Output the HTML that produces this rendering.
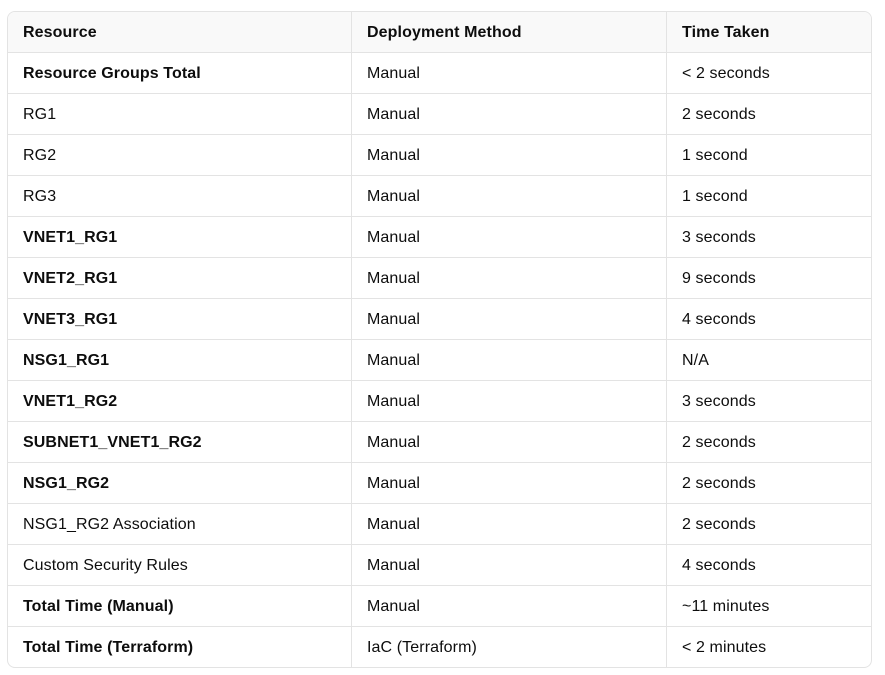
<!DOCTYPE html>
<html><head><style>
body{margin:0;background:#fff;font-family:"Liberation Sans",sans-serif;color:#0d0d0d}
.w{position:absolute;left:7px;top:11px;width:863px;height:655px;border:1px solid #e3e3e3;border-radius:8px;overflow:hidden}
table{border-collapse:collapse;width:865px;margin:-1px;table-layout:fixed}
td,th{height:41px;box-sizing:border-box;border:1px solid #e3e3e3;padding:2px 0 0 15px;font-size:16px;text-align:left;font-weight:normal;letter-spacing:0.1px}
th{background:#f9f9f9;font-weight:bold}
.b{font-weight:bold}
</style></head><body>
<div class="w"><table>
<colgroup><col style="width:344px"><col style="width:315px"><col></colgroup>
<tr><th>Resource</th><th>Deployment Method</th><th>Time Taken</th></tr>
<tr><td class="b">Resource Groups Total</td><td>Manual</td><td>&lt; 2 seconds</td></tr>
<tr><td>RG1</td><td>Manual</td><td>2 seconds</td></tr>
<tr><td>RG2</td><td>Manual</td><td>1 second</td></tr>
<tr><td>RG3</td><td>Manual</td><td>1 second</td></tr>
<tr><td class="b">VNET1_RG1</td><td>Manual</td><td>3 seconds</td></tr>
<tr><td class="b">VNET2_RG1</td><td>Manual</td><td>9 seconds</td></tr>
<tr><td class="b">VNET3_RG1</td><td>Manual</td><td>4 seconds</td></tr>
<tr><td class="b">NSG1_RG1</td><td>Manual</td><td>N/A</td></tr>
<tr><td class="b">VNET1_RG2</td><td>Manual</td><td>3 seconds</td></tr>
<tr><td class="b">SUBNET1_VNET1_RG2</td><td>Manual</td><td>2 seconds</td></tr>
<tr><td class="b">NSG1_RG2</td><td>Manual</td><td>2 seconds</td></tr>
<tr><td>NSG1_RG2 Association</td><td>Manual</td><td>2 seconds</td></tr>
<tr><td>Custom Security Rules</td><td>Manual</td><td>4 seconds</td></tr>
<tr><td class="b">Total Time (Manual)</td><td>Manual</td><td>~11 minutes</td></tr>
<tr><td class="b">Total Time (Terraform)</td><td>IaC (Terraform)</td><td>&lt; 2 minutes</td></tr>
</table></div>
</body></html>
